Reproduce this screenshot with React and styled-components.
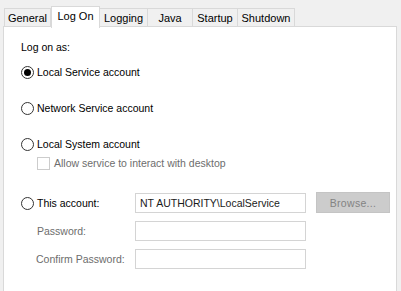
import React from 'react';
import styled, { createGlobalStyle } from 'styled-components';

const GlobalStyle = createGlobalStyle`
    html, body {
        margin: 0;
        padding: 0;
        background-color: #F0F0F0;
        overflow: hidden;
        font-family: "Liberation Sans", Arial, sans-serif;
        font-size: 10.5px;
        color: #000000;
    }
`;

const Window = styled.div`
    width: 401px;
    height: 291px;
    padding: 6px 3px 0px 3px;
    box-sizing: border-box;
    display: flex;
    flex-direction: column;
`;

const TabRow = styled.div`
    display: flex;
    align-items: flex-start;
    height: 21px;
    padding-left: 1px;
    position: relative;
    z-index: 1;
    margin-bottom: -1px;
`;

const Tab = styled.div`
    width: ${props => props.width}px;
    height: ${props => props.active ? 22 : 19}px;
    margin-top: ${props => props.active ? 0 : 2}px;
    box-sizing: border-box;
    border: 1px solid #D9D9D9;
    border-bottom: ${props => props.active ? 'none' : '1px solid #D9D9D9'};
    border-left: ${props => props.first || props.active ? '1px solid #D9D9D9' : 'none'};
    background-color: ${props => props.active ? '#FFFFFF' : '#F0F0F0'};
    display: flex;
    justify-content: center;
    align-items: ${props => props.active ? 'flex-start' : 'center'};
    padding-top: ${props => props.active ? 3 : 0}px;
    font-size: 11px;
    white-space: nowrap;
`;

const Panel = styled.div`
    flex: 1;
    margin-right: 1px;
    background-color: #FFFFFF;
    border: 1px solid #D9D9D9;
    border-bottom: none;
    padding: 12px 0px 0px 17px;
    display: flex;
    flex-direction: column;
`;

const Title = styled.div`
    height: 16px;
    line-height: 16px;
    margin-bottom: 9px;
`;

const RadioRow = styled.label`
    display: flex;
    align-items: center;
    height: 16px;
    margin-bottom: ${props => props.gap}px;
    gap: 3px;
`;

const RadioCircle = styled.span`
    width: 13px;
    height: 13px;
    box-sizing: border-box;
    border: 1px solid #333333;
    border-radius: 50%;
    display: flex;
    justify-content: center;
    align-items: center;
    flex-shrink: 0;

    &::after {
        content: '';
        width: 7px;
        height: 7px;
        border-radius: 50%;
        background-color: #000000;
        display: ${props => props.checked ? 'block' : 'none'};
    }
`;

const CheckRow = styled.div`
    display: flex;
    align-items: center;
    height: 16px;
    margin-left: 16px;
    gap: 4px;
    color: #6D6D6D;
    margin-bottom: 22px;
`;

const CheckBox = styled.span`
    width: 13px;
    height: 13px;
    box-sizing: border-box;
    border: 1px solid #CCCCCC;
    background-color: #FFFFFF;
`;

const AccountGrid = styled.div`
    display: grid;
    grid-template-columns: 104px 171px 74px;
    column-gap: 10px;
    row-gap: 8px;
    align-items: center;
`;

const FieldLabel = styled.div`
    color: #6D6D6D;
    padding-left: ${props => props.indent}px;
    white-space: nowrap;
`;

const AccountLabel = styled.label`
    display: flex;
    align-items: center;
    gap: 3px;
    white-space: nowrap;
`;

const TextBox = styled.div`
    height: 20px;
    box-sizing: border-box;
    border: 1px solid #D4D4D4;
    background-color: #FFFFFF;
    padding-left: 4px;
    display: flex;
    align-items: center;
    color: #1A1A1A;
    white-space: nowrap;
`;

const BrowseButton = styled.div`
    height: 21px;
    margin-top: -1px;
    box-sizing: border-box;
    background-color: #CCCCCC;
    border: 1px solid #C4C4C4;
    color: #838383;
    display: flex;
    justify-content: center;
    align-items: center;
    letter-spacing: 0.3px;
`;

const tabs = [
    { name: 'General', width: 47 },
    { name: 'Log On', width: 49, active: true },
    { name: 'Logging', width: 48 },
    { name: 'Java', width: 45 },
    { name: 'Startup', width: 45 },
    { name: 'Shutdown', width: 57 }
];

class App extends React.Component {
    render() {
        return (
            <Window>
                <GlobalStyle />
                <TabRow>
                    {tabs.map((tab, i) => (
                        <Tab key={tab.name} width={tab.width} active={tab.active} first={i === 0}>
                            {tab.name}
                        </Tab>
                    ))}
                </TabRow>
                <Panel>
                    <Title>Log on as:</Title>

                    <RadioRow gap={20}>
                        <RadioCircle checked />
                        Local Service account
                    </RadioRow>

                    <RadioRow gap={20}>
                        <RadioCircle />
                        Network Service account
                    </RadioRow>

                    <RadioRow gap={3}>
                        <RadioCircle />
                        Local System account
                    </RadioRow>

                    <CheckRow>
                        <CheckBox />
                        Allow service to interact with desktop
                    </CheckRow>

                    <AccountGrid>
                        <AccountLabel>
                            <RadioCircle />
                            This account:
                        </AccountLabel>
                        <TextBox>NT AUTHORITY\LocalService</TextBox>
                        <BrowseButton>Browse...</BrowseButton>

                        <FieldLabel indent={16}>Password:</FieldLabel>
                        <TextBox />
                        <div />

                        <FieldLabel indent={15}>Confirm Password:</FieldLabel>
                        <TextBox />
                        <div />
                    </AccountGrid>
                </Panel>
            </Window>
        );
    }
}

export default App;
